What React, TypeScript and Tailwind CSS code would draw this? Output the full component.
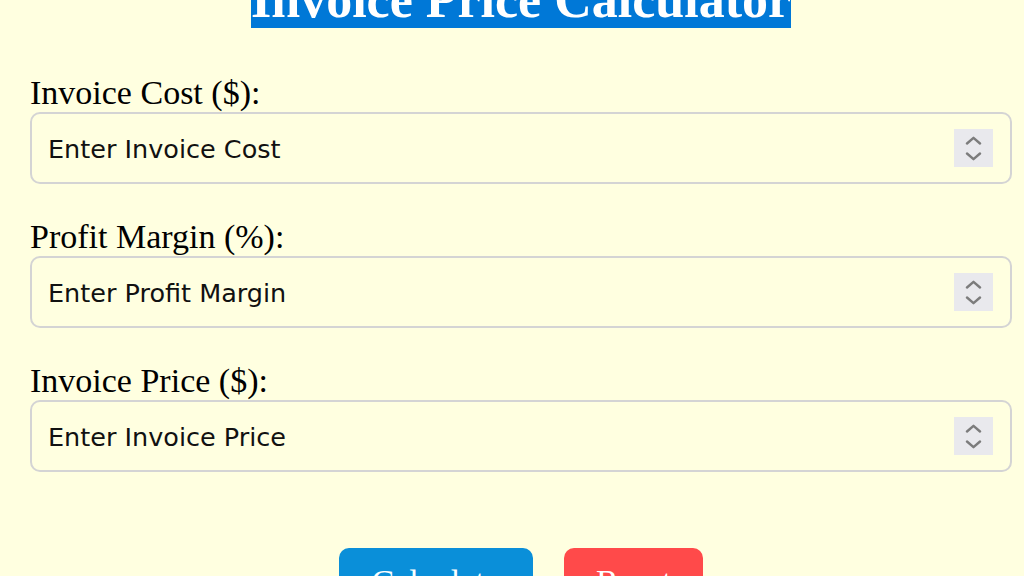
import React from "react";

function Spinner() {
  return (
    <div className="pointer-events-none absolute right-[19px] top-1/2 flex h-[38px] w-[39px] -translate-y-1/2 flex-col items-center justify-center gap-[7px] bg-[#e9e9ed]">
      <svg width="17" height="9" viewBox="0 0 17 9" fill="none">
        <path d="M2 7.5 L8.5 1.8 L15 7.5" stroke="#7c7c7c" strokeWidth="2.4" strokeLinecap="round" strokeLinejoin="round" />
      </svg>
      <svg width="17" height="9" viewBox="0 0 17 9" fill="none">
        <path d="M2 1.5 L8.5 7.2 L15 1.5" stroke="#7c7c7c" strokeWidth="2.4" strokeLinecap="round" strokeLinejoin="round" />
      </svg>
    </div>
  );
}

function Field({ label, placeholder, last }: { label: string; placeholder: string; last?: boolean }) {
  return (
    <div className={last ? "" : "mb-[33px]"}>
      <label className="block text-[34px] leading-[39px] text-black">{label}</label>
      <div className="relative">
        <input
          type="text"
          placeholder={placeholder}
          className="box-border h-[72px] w-full rounded-[10px] border-2 border-[#d4d4d4] bg-[#ffffe0] pl-[16px] pt-[2px] text-[25.5px] text-black outline-none placeholder:text-[#111]"
          style={{ fontFamily: '"DejaVu Sans", Verdana, sans-serif' }}
        />
        <Spinner />
      </div>
    </div>
  );
}

export default function App() {
  return (
    <div
      className="h-[576px] overflow-hidden bg-[#ffffe0]"
      style={{ fontFamily: '"Liberation Serif", "Times New Roman", serif' }}
    >
      <div className="ml-[30px] mt-[-30px] w-[982px]">
        <h1 className="text-center text-[52px] font-bold leading-[59px]">
          <span className="bg-[#0078d7] text-white">Invoice Price Calculator</span>
        </h1>
        <div className="mt-[44px]">
          <Field label="Invoice Cost ($):" placeholder="Enter Invoice Cost" />
          <Field label="Profit Margin (%):" placeholder="Enter Profit Margin" />
          <Field label="Invoice Price ($):" placeholder="Enter Invoice Price" last />
        </div>
        <div className="mt-[76px] flex justify-center gap-[31px]">
          <button className="rounded-[10px] bg-[#0a8fd9] px-[33px] py-[14px] text-[34px] leading-[39px] text-white">
            Calculate
          </button>
          <button className="rounded-[10px] bg-[#ff4a4a] px-[32px] py-[14px] text-[34px] leading-[39px] text-white">
            Reset
          </button>
        </div>
      </div>
    </div>
  );
}
